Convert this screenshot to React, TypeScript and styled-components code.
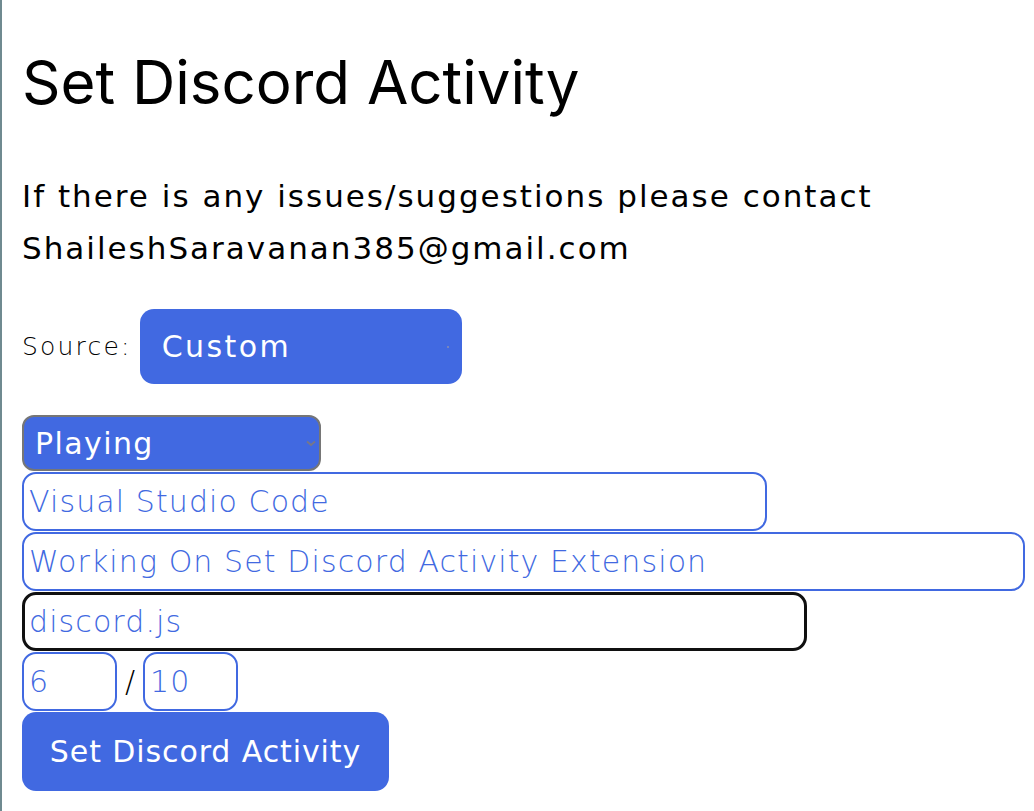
import React, { useState } from "react";
import styled, { createGlobalStyle } from "styled-components";

const GlobalStyle = createGlobalStyle`
  html, body {
    margin: 0;
    padding: 0;
    background: #ffffff;
  }
  body {
    font-family: "DejaVu Sans", "Noto Sans", sans-serif;
    border-left: 2px solid #6f8a90;
    min-height: 811px;
    box-sizing: border-box;
  }
`;

const royal = "#4169e1";

const Page = styled.div`
  padding: 1px 0 0 20px;
  display: flex;
  flex-direction: column;
  align-items: flex-start;
`;

const Title = styled.h1`
  font-family: Inter, "Liberation Sans", sans-serif;
  font-weight: 400;
  font-size: 60px;
  line-height: 1.2;
  margin: 45px 0 0;
  color: #000;
`;

const Notice = styled.p`
  font-size: 31px;
  line-height: 52px;
  letter-spacing: 2px;
  margin: 52px 0 0;
  color: #000;
`;

const SourceRow = styled.div`
  display: flex;
  align-items: center;
  gap: 8px;
  margin-top: 35px;
`;

const Label = styled.label`
  font-size: 25px;
  font-weight: 200;
  letter-spacing: 2.2px;
  color: #000;
`;

const SelectWrap = styled.div`
  position: relative;
  display: inline-flex;
`;

const Select = styled.select<{ $w: number; $h: number; $outlined?: boolean }>`
  appearance: none;
  width: ${(p) => p.$w}px;
  height: ${(p) => p.$h}px;
  background-color: ${royal};
  color: #fff;
  font-family: inherit;
  font-size: 30px;
  font-weight: 400;
  letter-spacing: ${(p) => (p.$outlined ? 1.4 : 2.4)}px;
  border-radius: ${(p) => (p.$outlined ? 12 : 14)}px;
  border: ${(p) => (p.$outlined ? "2px solid #767676" : "none")};
  padding: 0 0 0 ${(p) => (p.$outlined ? 11 : 22)}px;
  box-sizing: border-box;
  outline: none;
`;

// little grey chevron drawn over the right end of a select
const Chevron = styled.svg<{ $right: number; $size: number }>`
  position: absolute;
  right: ${(p) => p.$right}px;
  top: 50%;
  width: ${(p) => p.$size}px;
  height: ${(p) => p.$size}px;
  transform: translateY(-50%);
  pointer-events: none;
`;

const Form = styled.div`
  display: flex;
  flex-direction: column;
  align-items: flex-start;
  gap: 1px;
  margin-top: 31px;
`;

const Field = styled.input<{ $w: number; $focused?: boolean }>`
  width: ${(p) => p.$w}px;
  height: 59px;
  box-sizing: border-box;
  border: ${(p) => (p.$focused ? "3px solid #101010" : `2px solid ${royal}`)};
  border-radius: 14px;
  padding: 0 0 0 ${(p) => (p.$focused ? 4 : 5)}px;
  font-family: inherit;
  font-size: 30px;
  font-weight: 200;
  letter-spacing: 1.1px;
  color: ${royal};
  background: #fff;
  outline: none;
`;

const CountRow = styled.div`
  display: flex;
  align-items: center;
  gap: 8px;
  font-size: 30px;
  font-weight: 200;
`;

const Submit = styled.button`
  width: 367px;
  height: 79px;
  border: none;
  border-radius: 14px;
  background: ${royal};
  color: #fff;
  font-family: inherit;
  font-size: 30px;
  font-weight: 400;
  letter-spacing: 0.9px;
  cursor: pointer;
`;

export default function App() {
  const [source, setSource] = useState("custom");
  const [type, setType] = useState("playing");
  const [details, setDetails] = useState("Visual Studio Code");
  const [state, setState] = useState("Working On Set Discord Activity Extension");
  const [image, setImage] = useState("discord.js");
  const [partySize, setPartySize] = useState("6");
  const [partyMax, setPartyMax] = useState("10");

  return (
    <>
      <GlobalStyle />
      <Page>
        <Title>Set Discord Activity</Title>
        <Notice>
          If there is any issues/suggestions please contact
          <br />
          ShaileshSaravanan385@gmail.com
        </Notice>
        <SourceRow>
          <Label htmlFor="source">Source:</Label>
          <SelectWrap>
            <Select
              id="source"
              $w={322}
              $h={75}
              value={source}
              onChange={(e) => setSource(e.target.value)}
            >
              <option value="custom">Custom</option>
              <option value="vscode">VS Code</option>
            </Select>
            <Chevron $right={12} $size={4} viewBox="0 0 4 4">
              <circle cx="2" cy="2" r="1" fill="#8a8fb0" />
            </Chevron>
          </SelectWrap>
        </SourceRow>
        <Form>
          <SelectWrap>
            <Select
              $w={299}
              $h={56}
              $outlined
              value={type}
              onChange={(e) => setType(e.target.value)}
            >
              <option value="playing">Playing</option>
              <option value="watching">Watching</option>
              <option value="listening">Listening</option>
            </Select>
            <Chevron $right={4} $size={12} viewBox="0 0 12 12">
              <path d="M2 4.5l4 3.5 4-3.5" fill="none" stroke="#777788" strokeWidth="1.8" />
            </Chevron>
          </SelectWrap>
          <Field $w={745} value={details} onChange={(e) => setDetails(e.target.value)} />
          <Field $w={1003} value={state} onChange={(e) => setState(e.target.value)} />
          <Field
            $w={785}
            $focused
            value={image}
            onChange={(e) => setImage(e.target.value)}
          />
          <CountRow>
            <Field $w={95} value={partySize} onChange={(e) => setPartySize(e.target.value)} />
            /
            <Field $w={95} value={partyMax} onChange={(e) => setPartyMax(e.target.value)} />
          </CountRow>
          <Submit>Set Discord Activity</Submit>
        </Form>
      </Page>
    </>
  );
}
